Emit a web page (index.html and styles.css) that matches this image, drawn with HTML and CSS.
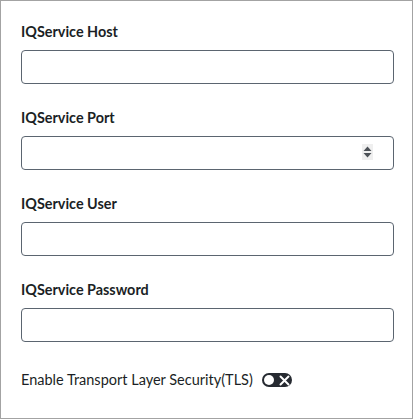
FILE: index.html
```html
<!DOCTYPE html>
<html>
<head>
<meta charset="utf-8">
<link rel="stylesheet" href="styles.css">
</head>
<body>
<div class="panel">
  <div class="field">
    <label class="label">IQService Host</label>
    <div class="input"></div>
  </div>
  <div class="field">
    <label class="label">IQService Port</label>
    <div class="input">
      <span class="spin">
        <svg width="11" height="16" viewBox="0 0 11 16"><path d="M1.5 7 L5.5 2.5 L9.5 7 Z M1.5 9 L5.5 13.5 L9.5 9 Z" fill="#4c5157"/></svg>
      </span>
    </div>
  </div>
  <div class="field">
    <label class="label">IQService User</label>
    <div class="input"></div>
  </div>
  <div class="field">
    <label class="label">IQService Password</label>
    <div class="input"></div>
  </div>
  <div class="toggle-row">
    <span class="toggle-text">Enable Transport Layer Security(TLS)</span>
    <span class="toggle">
      <span class="knob"></span>
      <svg class="x" width="11" height="11" viewBox="0 0 11 11"><path d="M1.5 1.5 L9.5 9.5 M9.5 1.5 L1.5 9.5" stroke="#fff" stroke-width="2" stroke-linecap="round"/></svg>
    </span>
  </div>
</div>
</body>
</html>
```

FILE: styles.css
```css
html, body {
  margin: 0;
  padding: 0;
  background: #fff;
}
.panel {
  box-sizing: border-box;
  width: 413px;
  height: 419px;
  border: 1px solid #a3a3a3;
  padding: 21px 0 0 20px;
  font-family: Lato, "Liberation Sans", sans-serif;
  color: #1b1f25;
}
.field {
  display: flex;
  flex-direction: column;
  margin-bottom: 24px;
}
.label {
  font-size: 14.4px;
  font-weight: 700;
  line-height: 20px;
  height: 20px;
  margin-bottom: 8px;
}
.input {
  position: relative;
  box-sizing: border-box;
  width: 373px;
  height: 34px;
  border: 1px solid #5b6570;
  border-radius: 4px;
  background: #fff;
}
.spin {
  position: absolute;
  right: 20px;
  top: 7px;
  width: 11px;
  height: 16px;
  background: #efefef;
  display: flex;
  align-items: center;
  justify-content: center;
}
.toggle-row {
  display: flex;
  align-items: center;
  margin-top: 28px;
  height: 20px;
}
.toggle-text {
  font-size: 14.5px;
  line-height: 20px;
}
.toggle {
  margin-left: 9px;
  width: 30px;
  height: 14px;
  border-radius: 7px;
  background: #262a31;
  display: flex;
  align-items: center;
  justify-content: space-between;
  padding: 0 2px 0 2px;
  box-sizing: border-box;
}
.knob {
  width: 10px;
  height: 10px;
  border-radius: 50%;
  background: #fff;
}
```
